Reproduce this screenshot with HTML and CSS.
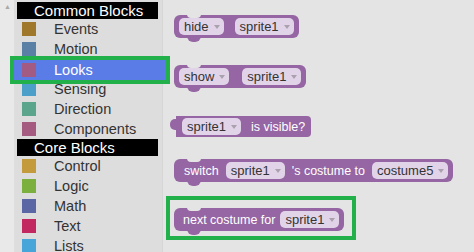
FILE: index.html
```html
<!DOCTYPE html>
<html lang="en">
<head>
  <meta charset="UTF-8">
  <title>Blocks</title>
  <link rel="stylesheet" href="styles.css">
</head>
<body>
  <div class="app">
    <div class="toolbox">
      <div class="scroll"><span class="arrow">&#9650;</span></div>
      <div class="cats">
        <div class="head">Common Blocks</div>
        <div class="cat"><span class="sw sw-events"></span>Events</div>
        <div class="cat"><span class="sw sw-motion"></span>Motion</div>
        <div class="cat selected"><span class="sw sw-looks"></span>Looks</div>
        <div class="cat"><span class="sw sw-sensing"></span>Sensing</div>
        <div class="cat"><span class="sw sw-direction"></span>Direction</div>
        <div class="cat"><span class="sw sw-components"></span>Components</div>
        <div class="head">Core Blocks</div>
        <div class="cat"><span class="sw sw-control"></span>Control</div>
        <div class="cat"><span class="sw sw-logic"></span>Logic</div>
        <div class="cat"><span class="sw sw-math"></span>Math</div>
        <div class="cat"><span class="sw sw-text"></span>Text</div>
        <div class="cat"><span class="sw sw-lists"></span>Lists</div>
      </div>
    </div>

    <div class="workspace">
      <div class="block stmt b-hide">
        <span class="field">hide<i class="dd"></i></span>
        <span class="field">sprite1<i class="dd"></i></span>
      </div>

      <div class="block stmt b-show">
        <span class="field">show<i class="dd"></i></span>
        <span class="field">sprite1<i class="dd"></i></span>
      </div>

      <div class="block output b-visible">
        <span class="field">sprite1<i class="dd"></i></span>
        <span class="label">is visible?</span>
      </div>

      <div class="block stmt b-switch">
        <span class="label">switch</span>
        <span class="field">sprite1<i class="dd"></i></span>
        <span class="label">'s costume to</span>
        <span class="field">costume5<i class="dd"></i></span>
      </div>

      <div class="mark">
        <div class="block stmt b-next">
          <span class="label">next costume for</span>
          <span class="field">sprite1<i class="dd"></i></span>
        </div>
      </div>
    </div>
  </div>
</body>
</html>
```

FILE: styles.css
```css
body {
  margin: 0;
  font-family: "Liberation Sans", Arial, sans-serif;
  background-color: #e4e4e4;
  overflow: hidden;
}

.app {
  display: flex;
  width: 474px;
  height: 252px;
}

/* toolbox on the left */
.toolbox {
  display: flex;
  width: 162px;
  background-color: #dddddd;
  flex-shrink: 0;
}

.scroll {
  width: 14px;
  background-color: #e9e9e9;
}

.arrow {
  display: block;
  margin: 3px 0 0 4px;
  font-size: 7px;
  color: #a8a8a8;
}

.cats {
  flex: 1;
  padding-top: 2px;
}

.head {
  height: 17px;
  line-height: 17px;
  margin-left: 3px;
  margin-right: 4px;
  padding-left: 17px;
  background-color: #000;
  color: #fff;
  font-size: 15px;
}

.cat {
  display: flex;
  align-items: center;
  height: 20px;
  font-size: 14.5px;
  color: #333;
}

.sw {
  width: 14px;
  height: 14px;
  margin-left: 8px;
  margin-right: 18px;
}

.cat.selected {
  background-color: #5a7ce6;
  color: #fff;
  outline: 4px solid #22b04b;
  position: relative;
  z-index: 1;
  margin-right: -4px;
  margin-top: 1px;
  margin-bottom: -1px;
}

.sw-events { background-color: #a0782b; }
.sw-motion { background-color: #5b80a5; }
.sw-looks { background-color: #a35b83; }
.sw-sensing { background-color: #4c9fc9; }
.sw-direction { background-color: #5ba58c; }
.sw-components { background-color: #a55b80; }
.sw-control { background-color: #c39a3c; }
.sw-logic { background-color: #7bb03f; }
.sw-math { background-color: #5b67a5; }
.sw-text { background-color: #c2285f; }
.sw-lists { background-color: #47a5d9; }

/* workspace with blocks */
.workspace {
  flex: 1;
  display: flex;
  flex-direction: column;
  align-items: flex-start;
  padding-left: 11px;
  border-left: 1px solid #d6d6d6;
}

.block {
  display: flex;
  align-items: center;
  gap: 7px;
  height: 23px;
  padding: 0 5px;
  background-color: #9566a3;
  border-radius: 6px;
  position: relative;
  color: #fff;
  font-size: 12.5px;
}

/* notch on top, tab on the bottom */
.stmt::before {
  content: "";
  position: absolute;
  top: -1px;
  left: 13px;
  width: 14px;
  height: 4px;
  background-color: #e4e4e4;
  border-radius: 0 0 6px 6px;
}

.stmt::after {
  content: "";
  position: absolute;
  bottom: -4px;
  left: 13px;
  width: 14px;
  height: 6px;
  background-color: #9566a3;
  border-radius: 0 0 6px 6px;
}

.output {
  border-radius: 0 4px 4px 0;
  height: 21px;
}

.output::before {
  content: "";
  position: absolute;
  left: -6px;
  top: 3px;
  width: 7px;
  height: 11px;
  background-color: #9566a3;
  border-radius: 5px 0 0 5px;
}

.label {
  white-space: nowrap;
}

.field {
  display: flex;
  align-items: center;
  height: 17px;
  padding: 0 4px 0 5px;
  background-color: #e2d4e8;
  border-radius: 5px;
  color: #333;
  font-size: 13px;
  white-space: nowrap;
}

/* small dropdown triangle */
.dd {
  width: 0;
  height: 0;
  margin-left: 5px;
  border-left: 3px solid transparent;
  border-right: 3px solid transparent;
  border-top: 4px solid #a9a1ad;
}

.b-hide {
  margin-top: 15px;
  gap: 11px;
}

.b-show {
  margin-top: 27px;
  gap: 13px;
}

.b-visible {
  margin-top: 28px;
  margin-left: 2px;
  padding-left: 6px;
  padding-right: 6px;
  gap: 10px;
}

.b-switch {
  margin-top: 22px;
  padding-left: 10px;
}

.b-next {
  padding-left: 9px;
  gap: 5px;
}

.mark {
  margin-top: 14px;
  margin-left: -8px;
  padding: 8px 8px 5px 4px;
  border: 4px solid #22b04b;
}
```
